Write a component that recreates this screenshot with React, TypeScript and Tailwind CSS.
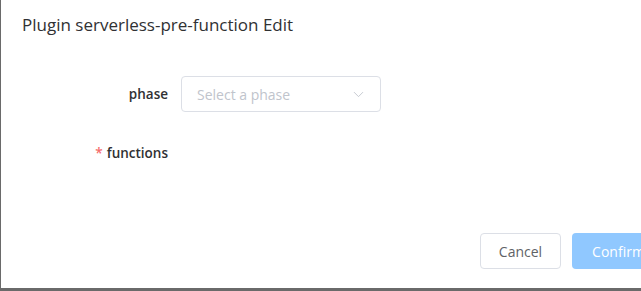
import { ChevronDown } from "lucide-react";

export default function App() {
  return (
    <div
      className="w-[641px] h-[291px] overflow-hidden bg-[#6a6a6a] pl-[1px] pb-[3px] flex"
      style={{ fontFamily: '"Open Sans", "Noto Sans", sans-serif' }}
    >
      <div className="w-[684px] shrink-0 h-[288px] bg-white flex flex-col">
        {/* Header */}
        <div className="pt-[12px] pl-[21px] text-[17px] leading-[26px] text-[#303133]">
          Plugin serverless-pre-function Edit
        </div>

        {/* Form */}
        <div className="mt-[38px] flex flex-col">
          <div className="flex items-center">
            <label className="w-[167px] text-right text-[13.5px] font-semibold text-[#303133]">
              phase
            </label>
            <div className="ml-[13px] w-[200px] h-[36px] border border-[#dcdfe6] rounded-[4px] flex items-center justify-between pl-[15px] pr-[13px]">
              <span className="text-[14px] text-[#c0c4cc]">Select a phase</span>
              <ChevronDown className="w-[17px] h-[17px] text-[#c0c4cc]" strokeWidth={1.25} />
            </div>
          </div>
          <div className="mt-[31px] flex items-center">
            <label className="w-[167px] text-right text-[13.5px] font-semibold text-[#303133]">
              <span className="text-[#f56c6c] mr-[4px]">*</span>functions
            </label>
          </div>
        </div>

        {/* Footer */}
        <div className="mt-auto mb-[19px] flex justify-end gap-[11px] pr-[20px]">
          <button className="w-[81px] h-[36px] border border-[#dcdfe6] rounded-[4px] bg-white text-[14px] text-[#606266]">
            Cancel
          </button>
          <button className="w-[93px] h-[36px] rounded-[4px] bg-[#90c8ff] text-[14px] text-white">
            Confirm
          </button>
        </div>
      </div>
    </div>
  );
}
